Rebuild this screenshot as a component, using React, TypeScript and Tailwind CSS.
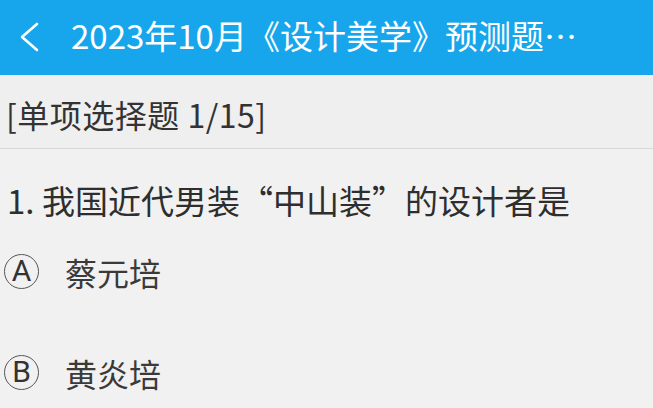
import React from "react";

const font = { fontFamily: '"Noto Sans CJK SC", "Noto Sans", sans-serif' };

function Opt({ letter, text }: { letter: string; text: string }) {
  return (
    <div className="flex items-center h-[101px]">
      <div className="ml-[4px] w-[35px] h-[35px] rounded-full border-[1.5px] border-[#555] flex items-center justify-center text-[30px] leading-none text-[#333] font-['Roboto',sans-serif]">
        <span className="-mt-[1px]">{letter}</span>
      </div>
      <div className="ml-[26px] text-[32px] leading-none text-[#3a3a3a]">{text}</div>
    </div>
  );
}

export default function App() {
  return (
    <div className="w-[653px] h-[408px] overflow-hidden bg-[#f1f1f1]" style={font}>
      <div className="h-[75px] bg-[#17a6eb] flex items-center text-white">
        <svg width="22" height="32" viewBox="0 0 22 32" className="ml-[18px] -mt-[2px]">
          <path d="M19 3 L4 16 L19 29" fill="none" stroke="white" strokeWidth="2.6" strokeLinecap="round" strokeLinejoin="round" />
        </svg>
        <div className="ml-[31px] text-[33px] leading-none whitespace-nowrap -mt-[5px]">2023年10月《设计美学》预测题…</div>
      </div>
      <div className="h-[74px] bg-[#efefef] border-b border-[#d6d6d6] flex items-center">
        <div className="ml-[6px] mt-[4px] text-[32px] leading-none text-[#333] tracking-[0.5px]">[单项选择题 1/15]</div>
      </div>
      <div className="pt-[35px]">
        <div className="ml-[7px] text-[33px] leading-none text-[#2e2e2e] whitespace-nowrap">1. 我国近代男装“中山装”的设计者是</div>
      </div>
      <div className="mt-[4px]">
        <Opt letter="A" text="蔡元培" />
        <Opt letter="B" text="黄炎培" />
      </div>
    </div>
  );
}
